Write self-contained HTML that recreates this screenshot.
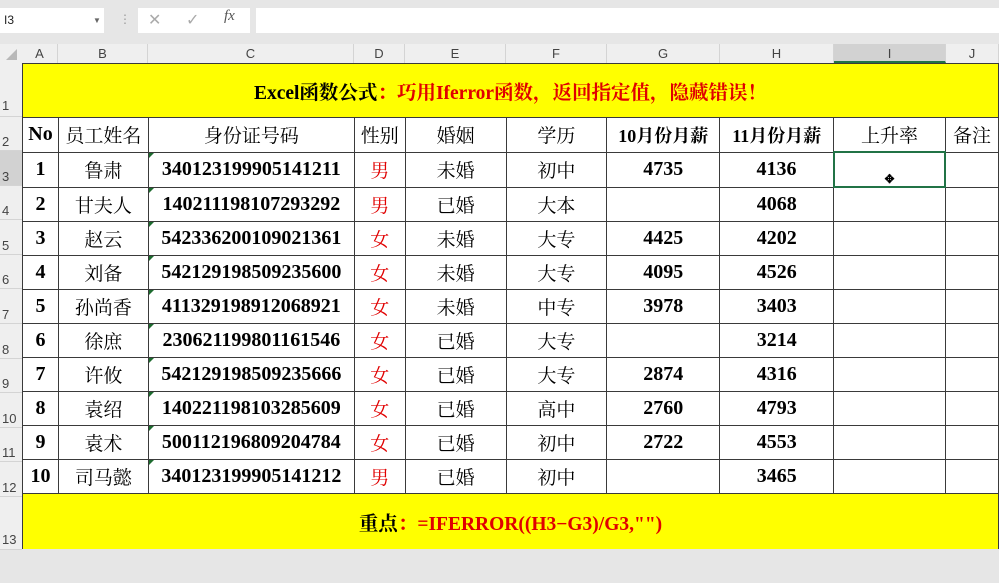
<!DOCTYPE html><html><head><meta charset="utf-8"><style>
body{margin:0;width:999px;height:550px;overflow:hidden;background:#e6e6e6;font-family:"Liberation Serif","Noto Serif CJK SC",serif;position:relative}
.a{position:absolute}
.hdr{position:absolute;top:44px;height:19px;background:#efefef;font:13px "Liberation Sans",sans-serif;color:#444;text-align:center;line-height:19px;border-right:1px solid #d4d4d4;box-sizing:border-box}
.rn{position:absolute;left:0;width:22px;background:#efefef;font:13px "Liberation Sans",sans-serif;color:#444;border-bottom:1px solid #d4d4d4;box-sizing:border-box;text-align:left;padding-left:2px}
table{position:absolute;left:22px;top:63px;border-collapse:collapse;table-layout:fixed;background:#fff}
td{border:1px solid #3a3a3a;text-align:center;font-weight:bold;font-size:20px;padding:0;height:33px;white-space:nowrap;overflow:hidden;position:relative}
td.n{font-weight:normal;font-size:19px}
.r{color:#e00000}
.y{background:#ffff00}
.tri{position:absolute;left:0;top:0;width:0;height:0;border-top:5px solid #1d6b2f;border-right:5px solid transparent}
</style></head><body>
<div class="a" style="left:0;top:8px;width:104px;height:25px;background:#fff;font:12px 'Liberation Sans',sans-serif;line-height:25px;padding-left:4px;box-sizing:border-box;color:#222">I3<span style="position:absolute;left:93px;font-size:8px;color:#666">▼</span></div>
<div class="a" style="left:119px;top:12px;color:#999;font-size:12px">⋮</div>
<div class="a" style="left:138px;top:8px;width:112px;height:25px;background:#fff;color:#aaa;font:16px 'Liberation Sans',sans-serif;line-height:25px"><span style="position:absolute;left:10px">✕</span><span style="position:absolute;left:48px">✓</span><span style="position:absolute;left:86px;font:italic 15px 'Liberation Serif',serif;color:#555">fx</span></div>
<div class="a" style="left:256px;top:8px;width:743px;height:25px;background:#fff"></div>
<div class="a" style="left:0;top:44px;width:22px;height:19px;background:#efefef"><div style="position:absolute;left:6px;top:5px;border-bottom:11px solid #b8b8b8;border-left:11px solid transparent"></div></div>
<div class="hdr" style="left:22px;width:36px">A</div>
<div class="hdr" style="left:58px;width:90px">B</div>
<div class="hdr" style="left:148px;width:206px">C</div>
<div class="hdr" style="left:354px;width:51px">D</div>
<div class="hdr" style="left:405px;width:101px">E</div>
<div class="hdr" style="left:506px;width:101px">F</div>
<div class="hdr" style="left:607px;width:113px">G</div>
<div class="hdr" style="left:720px;width:114px">H</div>
<div class="hdr" style="left:834px;width:112px;background:#d2d2d2;border-bottom:2px solid #217346">I</div>
<div class="hdr" style="left:946px;width:53px">J</div>
<div class="rn" style="top:63px;height:54px;line-height:86px">1</div>
<div class="rn" style="top:117px;height:34px;line-height:50px">2</div>
<div class="rn" style="top:151px;height:35px;line-height:52px;background:#d2d2d2">3</div>
<div class="rn" style="top:186px;height:34px;line-height:50px">4</div>
<div class="rn" style="top:220px;height:35px;line-height:52px">5</div>
<div class="rn" style="top:255px;height:34px;line-height:50px">6</div>
<div class="rn" style="top:289px;height:35px;line-height:52px">7</div>
<div class="rn" style="top:324px;height:35px;line-height:52px">8</div>
<div class="rn" style="top:359px;height:34px;line-height:50px">9</div>
<div class="rn" style="top:393px;height:35px;line-height:52px">10</div>
<div class="rn" style="top:428px;height:34px;line-height:50px">11</div>
<div class="rn" style="top:462px;height:35px;line-height:52px">12</div>
<div class="rn" style="top:497px;height:53px;line-height:86px">13</div>
<table>
<colgroup><col style="width:36px"><col style="width:90px"><col style="width:206px"><col style="width:51px"><col style="width:101px"><col style="width:101px"><col style="width:113px"><col style="width:114px"><col style="width:112px"><col style="width:53px"></colgroup>
<tr><td colspan="10" class="y" style="height:53px;font-size:19.5px">Excel函数公式<span class="r">：巧用Iferror函数，返回指定值，隐藏错误！</span></td></tr>
<tr><td>No</td><td class="n">员工姓名</td><td class="n">身份证号码</td><td class="n">性别</td><td class="n">婚姻</td><td class="n">学历</td><td style="font-size:18px">10月份月薪</td><td style="font-size:18px">11月份月薪</td><td class="n">上升率</td><td class="n">备注</td></tr>
<tr><td>1</td><td class="n">鲁肃</td><td><i class="tri"></i>340123199905141211</td><td class="n r">男</td><td class="n">未婚</td><td class="n">初中</td><td>4735</td><td>4136</td><td style="border:2px solid #217346"><span style="font-size:12px;position:relative;top:8px">✥</span></td><td></td></tr>
<tr><td>2</td><td class="n">甘夫人</td><td><i class="tri"></i>140211198107293292</td><td class="n r">男</td><td class="n">已婚</td><td class="n">大本</td><td></td><td>4068</td><td></td><td></td></tr>
<tr><td>3</td><td class="n">赵云</td><td><i class="tri"></i>542336200109021361</td><td class="n r">女</td><td class="n">未婚</td><td class="n">大专</td><td>4425</td><td>4202</td><td></td><td></td></tr>
<tr><td>4</td><td class="n">刘备</td><td><i class="tri"></i>542129198509235600</td><td class="n r">女</td><td class="n">未婚</td><td class="n">大专</td><td>4095</td><td>4526</td><td></td><td></td></tr>
<tr><td>5</td><td class="n">孙尚香</td><td><i class="tri"></i>411329198912068921</td><td class="n r">女</td><td class="n">未婚</td><td class="n">中专</td><td>3978</td><td>3403</td><td></td><td></td></tr>
<tr><td>6</td><td class="n">徐庶</td><td><i class="tri"></i>230621199801161546</td><td class="n r">女</td><td class="n">已婚</td><td class="n">大专</td><td></td><td>3214</td><td></td><td></td></tr>
<tr><td>7</td><td class="n">许攸</td><td><i class="tri"></i>542129198509235666</td><td class="n r">女</td><td class="n">已婚</td><td class="n">大专</td><td>2874</td><td>4316</td><td></td><td></td></tr>
<tr><td>8</td><td class="n">袁绍</td><td><i class="tri"></i>140221198103285609</td><td class="n r">女</td><td class="n">已婚</td><td class="n">高中</td><td>2760</td><td>4793</td><td></td><td></td></tr>
<tr><td>9</td><td class="n">袁术</td><td><i class="tri"></i>500112196809204784</td><td class="n r">女</td><td class="n">已婚</td><td class="n">初中</td><td>2722</td><td>4553</td><td></td><td></td></tr>
<tr><td>10</td><td class="n">司马懿</td><td><i class="tri"></i>340123199905141212</td><td class="n r">男</td><td class="n">已婚</td><td class="n">初中</td><td></td><td>3465</td><td></td><td></td></tr>
<tr><td colspan="10" class="y" style="border-bottom:none;vertical-align:top;padding-top:14px;height:41px;font-size:19.5px">重点<span class="r">：=IFERROR((H3−G3)/G3,"")</span></td></tr>
</table>
</body></html>
